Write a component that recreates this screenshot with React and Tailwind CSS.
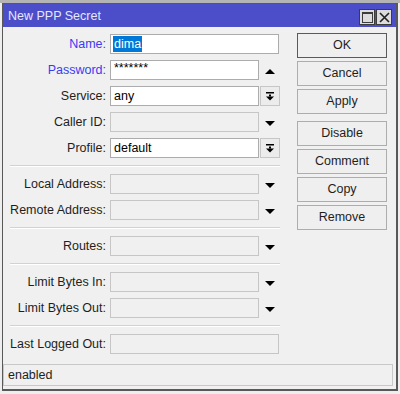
import React from 'react'

const font = { fontFamily: '"Liberation Sans", Arial, sans-serif' }

const UpArrow = () => (
  <svg width="10" height="5" viewBox="0 0 10 5"><polygon points="0,5 10,5 5,0" fill="#000" /></svg>
)

const DownArrow = () => (
  <svg width="10" height="5" viewBox="0 0 10 5"><polygon points="0,0 10,0 5,5" fill="#000" /></svg>
)

const ComboIcon = () => (
  <svg width="8" height="9" viewBox="0 0 8 9">
    <rect x="0" y="0" width="8" height="1.5" fill="#000" />
    <rect x="3" y="2.5" width="2" height="2" fill="#000" />
    <polygon points="0,4.5 8,4.5 4,8.5" fill="#000" />
  </svg>
)

const Row = ({ label, blue, children }) => (
  <div className="flex items-center h-[20px]">
    <div className={`w-[96px] text-right text-[12.5px] leading-none whitespace-nowrap ${blue ? 'text-[#3b3bef]' : 'text-[#1e1e1e]'}`}>{label}</div>
    <div className="ml-[4px] flex items-center">{children}</div>
  </div>
)

const Box = ({ w, active, children }) => (
  <div
    className={`h-[20px] border flex items-center px-[2px] text-[12.5px] text-black ${active ? 'bg-white border-[#acacac]' : 'bg-[#f0f0f0] border-[#c6c6c6]'}`}
    style={{ width: w }}
  >
    {children}
  </div>
)

const Arrow = ({ up }) => (
  <div className="w-[20px] h-[20px] flex items-center justify-center pl-[2px] pt-[2px]">
    {up ? <UpArrow /> : <DownArrow />}
  </div>
)

const Combo = () => (
  <div className="ml-[1px] w-[20px] h-[20px] border border-[#c6c6c6] bg-[#ececec] flex items-center justify-center">
    <ComboIcon />
  </div>
)

const Sep = () => <div className="my-[7px] w-[270px] h-[2px] border-t border-[#d2d2d2] border-b border-b-white" />

const Btn = ({ children, def, mt }) => (
  <div
    className={`w-[90px] h-[25px] flex items-center justify-center text-[12.5px] text-[#1e1e1e] bg-[#efefef] border ${def ? 'border-[#5a5a5a]' : 'border-[#adadad]'} ${mt || 'mt-[3px]'}`}
  >
    {children}
  </div>
)

export default function App() {
  return (
    <div className="w-[400px] h-[394px] bg-[#eeeeee] border-t-[3px] border-[#b4b4b4] pl-[2px] overflow-hidden" style={font}>
      <div className="w-[396px] h-[388px] border-l border-t border-r-2 border-b-2 border-[#585858] bg-[#f0f0f0] flex flex-col">
        {/* title bar */}
        <div className="h-[23px] bg-[#4b4ec8] flex items-center pl-[5px] pr-[4px]">
          <div className="text-[12.5px] text-[#e6e6ff] pt-[2px] flex-1">New PPP Secret</div>
          <div className="flex gap-[1px] pt-[3px]">
            <div className="w-[16px] h-[16px] bg-[#dcdcdc] border border-[#3c3c3c] flex items-center justify-center">
              <div className="w-[11px] h-[11px] border border-[#3c3c3c] border-t-2" />
            </div>
            <div className="w-[16px] h-[16px] bg-[#dcdcdc] border border-[#3c3c3c] flex items-center justify-center">
              <svg width="11" height="11" viewBox="0 0 11 11">
                <path d="M1 1 L10 10 M10 1 L1 10" stroke="#202020" strokeWidth="1.6" />
              </svg>
            </div>
          </div>
        </div>

        {/* body */}
        <div className="flex-1 flex">
          <div className="pl-[7px] pt-[7px] w-[277px]">
            <div className="flex flex-col gap-[6px]">
              <Row label="Name:" blue>
                <Box w={169} active>
                  <span className="bg-[#0078d7] text-white px-[1px] leading-[16px]">dima</span>
                </Box>
              </Row>
              <Row label="Password:" blue>
                <Box w={149} active><span className="pl-[1px] leading-none pb-[4px]">*******</span></Box>
                <Arrow up />
              </Row>
              <Row label="Service:">
                <Box w={149} active><span className="pl-[1px]">any</span></Box>
                <Combo />
              </Row>
              <Row label="Caller ID:">
                <Box w={149} />
                <Arrow />
              </Row>
              <Row label="Profile:">
                <Box w={149} active><span className="pl-[1px]">default</span></Box>
                <Combo />
              </Row>
            </div>
            <Sep />
            <div className="flex flex-col gap-[6px]">
              <Row label="Local Address:">
                <Box w={149} />
                <Arrow />
              </Row>
              <Row label="Remote Address:">
                <Box w={149} />
                <Arrow />
              </Row>
            </div>
            <Sep />
            <Row label="Routes:">
              <Box w={149} />
              <Arrow />
            </Row>
            <Sep />
            <div className="flex flex-col gap-[6px]">
              <Row label="Limit Bytes In:">
                <Box w={149} />
                <Arrow />
              </Row>
              <Row label="Limit Bytes Out:">
                <Box w={149} />
                <Arrow />
              </Row>
            </div>
            <Sep />
            <Row label="Last Logged Out:">
              <Box w={169} />
            </Row>
          </div>

          <div className="ml-[17px] pt-[6px] flex flex-col">
            <Btn def mt="mt-0">OK</Btn>
            <Btn>Cancel</Btn>
            <Btn>Apply</Btn>
            <Btn mt="mt-[7px]">Disable</Btn>
            <Btn>Comment</Btn>
            <Btn>Copy</Btn>
            <Btn>Remove</Btn>
          </div>
        </div>

        {/* status bar */}
        <div className="h-[22px] mr-[3px] mb-[3px] border border-[#c8c8c8] flex items-center pl-[4px] text-[12.5px] text-[#1e1e1e]">
          enabled
        </div>
      </div>
    </div>
  )
}
